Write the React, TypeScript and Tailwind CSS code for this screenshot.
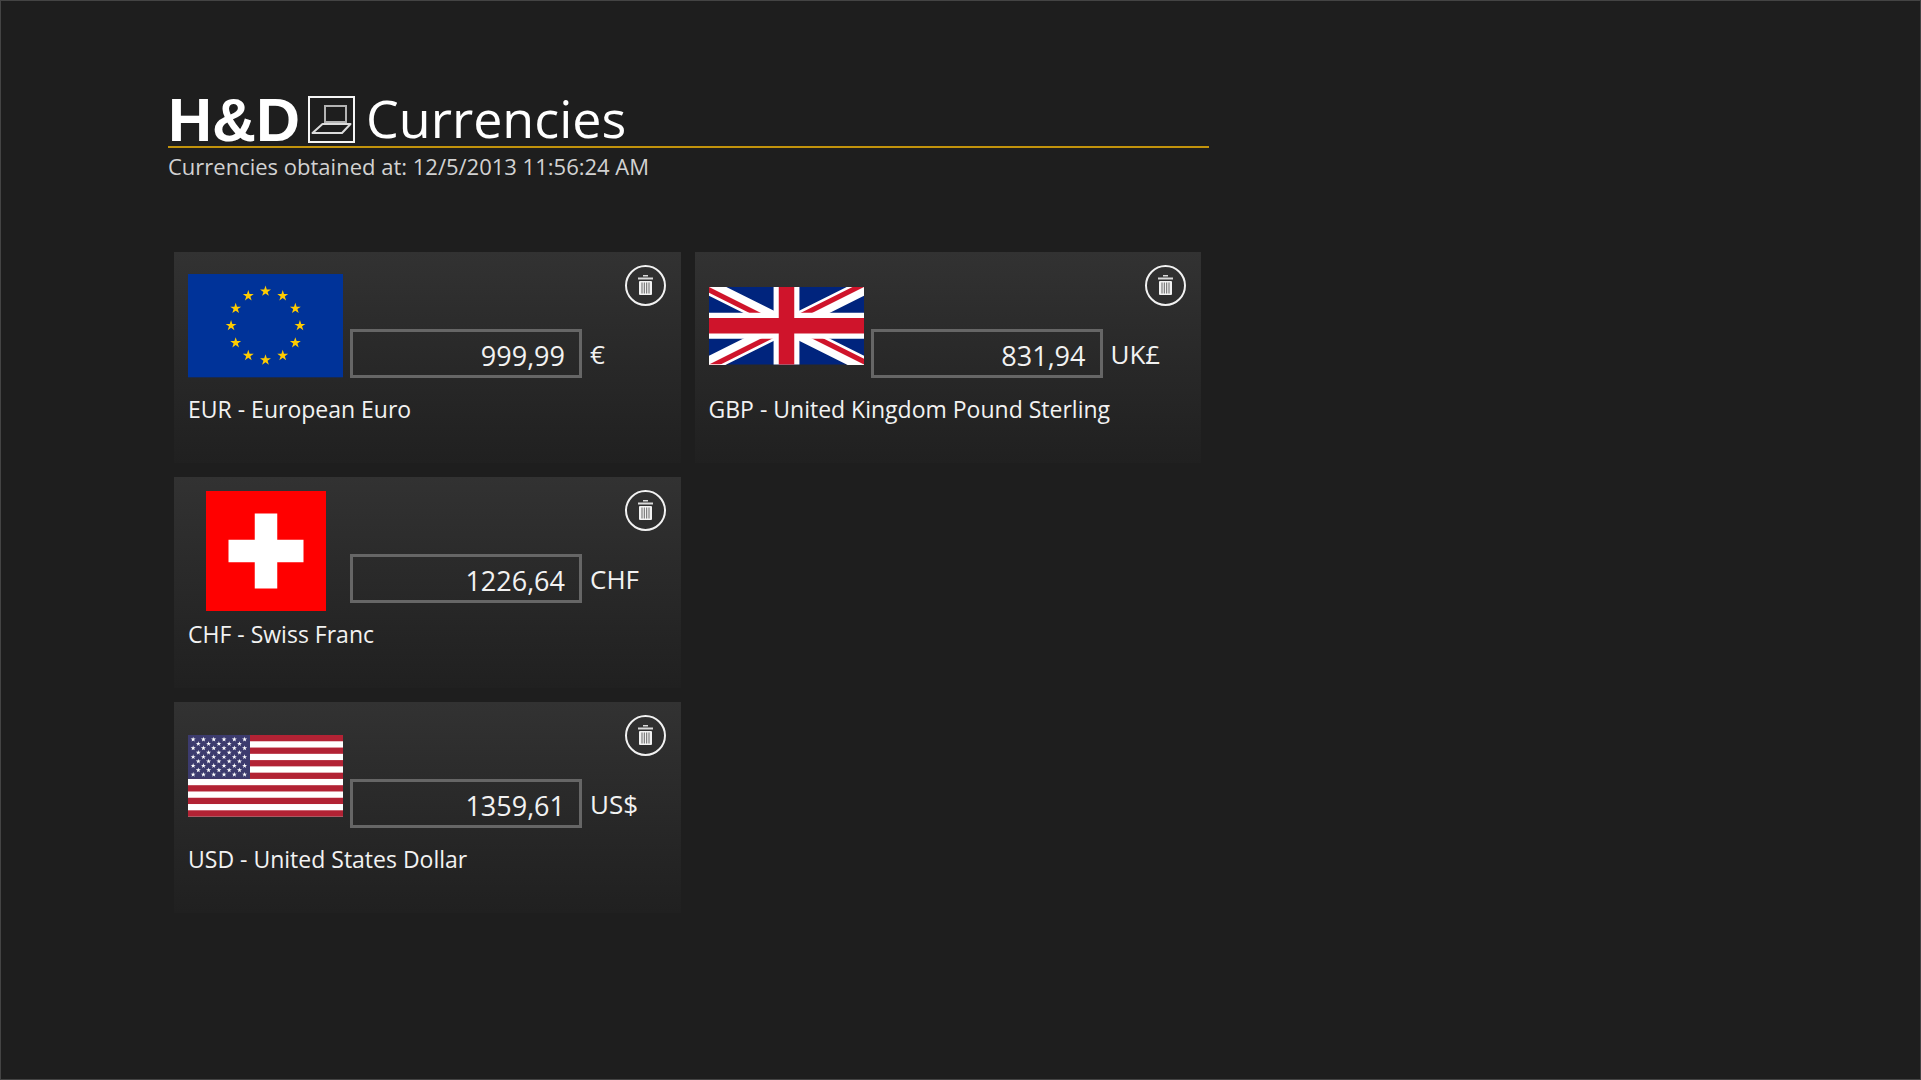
import React from "react";

type Currency = {
  code: string;
  name: string;
  symbol: string;
  amount: string;
  Flag: () => React.JSX.Element;
};

function star(cx: number, cy: number, r: number) {
  return Array.from({ length: 10 }, (_, i) => {
    const radius = i % 2 ? r * 0.382 : r;
    const a = (Math.PI / 5) * i - Math.PI / 2;
    return `${cx + radius * Math.cos(a)},${cy + radius * Math.sin(a)}`;
  }).join(" ");
}

function EuFlag() {
  return (
    <svg viewBox="0 0 810 540" className="w-full" aria-hidden="true">
      <rect width="810" height="540" fill="#003399" />
      {Array.from({ length: 12 }, (_, i) => {
        const a = (Math.PI / 6) * i;
        return (
          <polygon key={i} points={star(405 + 180 * Math.sin(a), 270 - 180 * Math.cos(a), 30)} fill="#ffcc00" />
        );
      })}
    </svg>
  );
}

function UkFlag() {
  return (
    <svg viewBox="0 0 60 30" className="w-full" aria-hidden="true">
      <clipPath id="uk-quarters">
        <path d="M30,15h30v15zv15h-30zh-30v-15zv-15h30z" />
      </clipPath>
      <rect width="60" height="30" fill="#00247d" />
      <path d="M0,0L60,30M60,0L0,30" stroke="#fff" strokeWidth="6" />
      <path d="M0,0L60,30M60,0L0,30" clipPath="url(#uk-quarters)" stroke="#cf142b" strokeWidth="4" />
      <path d="M30,0V30M0,15H60" stroke="#fff" strokeWidth="10" />
      <path d="M30,0V30M0,15H60" stroke="#cf142b" strokeWidth="6" />
    </svg>
  );
}

function SwissFlag() {
  return (
    <svg viewBox="0 0 32 32" className="h-full" aria-hidden="true">
      <rect width="32" height="32" fill="#ff0000" />
      <path d="M13 6h6v7h7v6h-7v7h-6v-7H6v-6h7z" fill="#fff" />
    </svg>
  );
}

function UsFlag() {
  return (
    <svg viewBox="0 0 1235 650" className="w-full" aria-hidden="true">
      <rect width="1235" height="650" fill="#fff" />
      {Array.from({ length: 7 }, (_, i) => (
        <rect key={i} y={i * 100} width="1235" height="50" fill="#b22234" />
      ))}
      <rect width="494" height="350" fill="#3c3b6e" />
      {Array.from({ length: 9 }, (_, row) =>
        Array.from({ length: row % 2 ? 5 : 6 }, (_, col) => (
          <polygon
            key={`${row}-${col}`}
            points={star(41 + (row % 2 ? 41 : 0) + col * 82, 35 + row * 35, 21)}
            fill="#fff"
          />
        )),
      )}
    </svg>
  );
}

function TrashIcon() {
  return (
    <svg viewBox="0 0 15 22" className="h-[22px] w-[15px]" aria-hidden="true">
      <rect x="5" y="0" width="5" height="1.500" fill="#d9d9d9" />
      <rect x="0" y="2.500" width="15" height="2" fill="#d9d9d9" />
      <rect x="1" y="6" width="13" height="14" rx="1" fill="#f2f2f2" />
      <path d="M4 7.500v11M6.300 7.500v11M8.700 7.500v11M11 7.500v11" stroke="#666" strokeWidth="1" />
    </svg>
  );
}

function LaptopIcon() {
  return (
    <svg viewBox="0 0 47 47" className="h-[47px] w-[47px]" fill="none" aria-hidden="true">
      <rect x="1" y="1" width="45" height="45" stroke="#f5f5f5" strokeWidth="2" />
      <rect x="17" y="10" width="21" height="16" stroke="#b4b4b4" strokeWidth="2" />
      <path d="M14.500 28H42.500L34 37H4.500Z" stroke="#dcdcdc" strokeWidth="2" strokeLinejoin="round" />
    </svg>
  );
}

const currencies: Currency[] = [
  { code: "EUR", name: "European Euro", symbol: "€", amount: "999,99", Flag: EuFlag },
  { code: "CHF", name: "Swiss Franc", symbol: "CHF", amount: "1226,64", Flag: SwissFlag },
  { code: "USD", name: "United States Dollar", symbol: "US$", amount: "1359,61", Flag: UsFlag },
  { code: "GBP", name: "United Kingdom Pound Sterling", symbol: "UK£", amount: "831,94", Flag: UkFlag },
];

function CurrencyCard({ code, name, symbol, amount, Flag }: Currency) {
  const id = `amount-${code}`;
  return (
    <li className="relative flex min-h-[211px] flex-col bg-linear-to-b from-[#323232] to-[#202020] p-3.5">
      <div className="flex">
        <div className="flex h-[120px] w-[155px] shrink-0 items-center justify-center">
          <Flag />
        </div>
        <div className="mt-[63px] ml-[7px] flex h-[49px] items-center gap-2">
          <input
            id={id}
            type="text"
            defaultValue={amount}
            className="h-[49px] w-[232px] border-[3px] border-[#666] bg-transparent px-3.5 pt-1 text-right text-[27px] leading-8 text-[#f2f2f2] outline-none"
          />
          <span className="text-[26px] leading-8 text-[#f2f2f2]">{symbol}</span>
        </div>
      </div>
      <label htmlFor={id} className="mt-[7px] text-[23px] leading-8 text-[#f2f2f2]">
        {code} - {name}
      </label>
      <button
        type="button"
        aria-label={`Remove ${name}`}
        className="absolute top-[13px] right-[15px] flex size-[41px] items-center justify-center rounded-full border-2 border-[#f2f2f2]"
      >
        <TrashIcon />
      </button>
    </li>
  );
}

export default function App() {
  return (
    <main className="min-h-screen border border-[#444] bg-[#1e1e1e] px-[167px] pt-[92px] font-['Open_Sans','Noto_Sans',sans-serif] text-white">
      <header className="max-w-[1041px]">
        <div className="flex h-[55px] items-center border-b-2 border-[#c2930c]">
          <span className="w-[140px] font-['Liberation_Sans'] text-[61px] leading-[54px] font-bold">H&amp;D</span>
          <LaptopIcon />
          <h1 className="ml-[11px] pb-1 text-[52px] leading-[50px]">Currencies</h1>
        </div>
        <p className="mt-0.5 text-[22px] leading-8 text-[#d2d2d2]">Currencies obtained at: 12/5/2013 11:56:24 AM</p>
      </header>
      <ul className="mt-[70px] ml-1.5 grid max-w-[1027px] grid-flow-col grid-cols-2 grid-rows-3 gap-3.5">
        {currencies.map((c) => (
          <CurrencyCard key={c.code} {...c} />
        ))}
      </ul>
    </main>
  );
}
